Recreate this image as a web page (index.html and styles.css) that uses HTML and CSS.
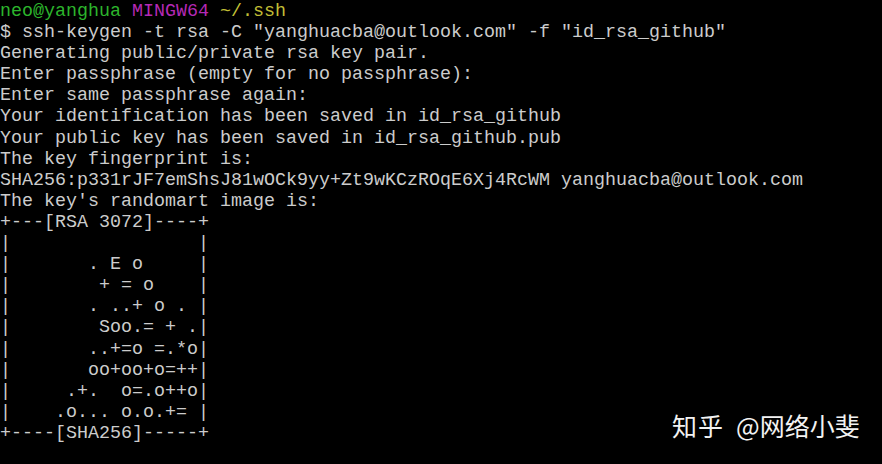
FILE: index.html
```html
<!DOCTYPE html>
<html>
<head>
<meta charset="utf-8">
<link rel="stylesheet" href="styles.css">
</head>
<body>
<div class="term">
<div class="line"><span class="green">neo@yanghua</span> <span class="magenta">MINGW64</span> <span class="yellow">~/.ssh</span></div>
<div class="line">$ ssh-keygen -t rsa -C "yanghuacba@outlook.com" -f "id_rsa_github"</div>
<div class="line">Generating public/private rsa key pair.</div>
<div class="line">Enter passphrase (empty for no passphrase):</div>
<div class="line">Enter same passphrase again:</div>
<div class="line">Your identification has been saved in id_rsa_github</div>
<div class="line">Your public key has been saved in id_rsa_github.pub</div>
<div class="line">The key fingerprint is:</div>
<div class="line">SHA256:p331rJF7emShsJ81wOCk9yy+Zt9wKCzROqE6Xj4RcWM yanghuacba@outlook.com</div>
<div class="line">The key's randomart image is:</div>
<div class="line">+---[RSA 3072]----+</div>
<div class="line">|                 |</div>
<div class="line">|       . E o     |</div>
<div class="line">|        + = o    |</div>
<div class="line">|       . ..+ o . |</div>
<div class="line">|        Soo.= + .|</div>
<div class="line">|       ..+=o =.*o|</div>
<div class="line">|       oo+oo+o=++|</div>
<div class="line">|     .+.  o=.o++o|</div>
<div class="line">|    .o... o.o.+= |</div>
<div class="line">+----[SHA256]-----+</div>
</div>
<div class="watermark"><span class="wm-logo">知乎</span><span>@网络小斐</span></div>
</body>
</html>
```
FILE: styles.css
```css
html, body {
  margin: 0;
  padding: 0;
  background: #000;
  width: 882px;
  height: 464px;
  overflow: hidden;
}
body {
  position: relative;
}
.term {
  padding: 1px 0 0 0;
  font-family: "Liberation Mono", "DejaVu Sans Mono", monospace;
  font-size: 18.33px;
  line-height: 21.1px;
  color: #cccccc;
}
.line {
  white-space: pre;
  height: 21.1px;
}
.green { color: #2cb52c; }
.magenta { color: #b529b5; }
.yellow { color: #c2bf35; }
.watermark {
  position: absolute;
  left: 672px;
  top: 410px;
  display: flex;
  gap: 12px;
  font-family: "Noto Sans CJK SC", sans-serif;
  font-size: 25px;
  line-height: 30px;
  color: #f2f2f2;
  white-space: pre;
}
.wm-logo {
  letter-spacing: 1px;
}
```
